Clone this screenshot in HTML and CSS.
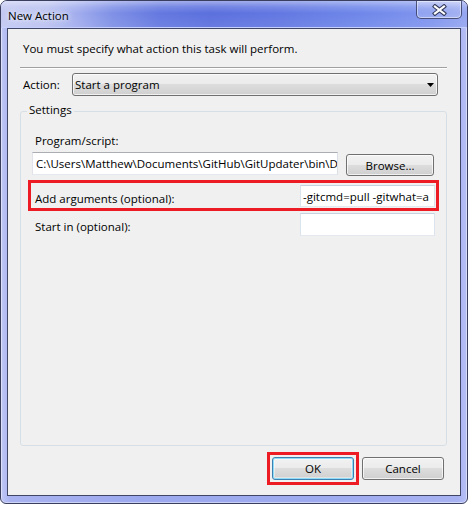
FILE: index.html
```html
<!DOCTYPE html>
<html>
<head>
<meta charset="utf-8">
<title>New Action</title>
<link rel="stylesheet" href="styles.css">
</head>
<body>
<div class="window">
  <div class="titlebar">
    <span class="title">New Action</span>
    <div class="close">
      <svg width="15" height="12" viewBox="0 0 15 12">
        <path d="M3 2.5 L12 9.5 M12 2.5 L3 9.5" stroke="#33395a" stroke-width="4.2" stroke-linecap="square" fill="none"/>
        <path d="M3 2.5 L12 9.5 M12 2.5 L3 9.5" stroke="#ffffff" stroke-width="2.2" stroke-linecap="square" fill="none"/>
      </svg>
    </div>
  </div>
  <div class="client">
    <p class="intro">You must specify what action this task will perform.</p>
    <div class="sep"></div>
    <div class="action-row">
      <span class="action-label">Action:</span>
      <div class="combo">
        <span>Start a program</span>
        <svg class="arrow" width="7" height="4" viewBox="0 0 7 4"><path d="M0 0 H7 L3.5 4 Z" fill="#000"/></svg>
      </div>
    </div>
    <fieldset class="settings">
      <legend>Settings</legend>
      <span class="prog-label">Program/script:</span>
      <div class="prog-row">
        <div class="textbox prog-input"><span>C:\Users\Matthew\Documents\GitHub\GitUpdater\bin\D</span></div>
        <div class="btn browse">Browse...</div>
      </div>
      <div class="args-box">
        <span class="field-label">Add arguments (optional):</span>
        <div class="textbox small-input args-input"><span>-gitcmd=pull -gitwhat=a</span></div>
      </div>
      <div class="start-row">
        <span class="field-label">Start in (optional):</span>
        <div class="textbox small-input start-input"></div>
      </div>
    </fieldset>
    <div class="buttons">
      <div class="ok-mark"><div class="btn dlg-btn default">OK</div></div>
      <div class="btn dlg-btn">Cancel</div>
    </div>
  </div>
</div>
</body>
</html>
```
FILE: styles.css
```css
* { box-sizing: border-box; }

body {
  margin: 0;
  background: #ffffff;
  font-family: "Open Sans", "Noto Sans", sans-serif;
  font-size: 11.5px;
  color: #000;
}

.window {
  width: 468px;
  height: 504px;
  border: 1px solid #3a3f60;
  border-radius: 7px 7px 6px 6px;
  padding: 0 6px 7px;
  display: flex;
  flex-direction: column;
  overflow: hidden;
  background: linear-gradient(to right, #c0c8f5 0, #a9b3f1 2%, #9ca9ee 30%, #9eabef 70%, #a7b2f2 98%, #b8c0f5 100%);
  box-shadow: inset 0 0 0 1px rgba(255, 255, 255, 0.45);
}

.titlebar {
  height: 27px;
  margin: 0 -6px;
  display: flex;
  align-items: flex-start;
  padding-left: 7px;
  background:
    linear-gradient(to bottom, rgba(255,255,255,0.42) 0, rgba(255,255,255,0.14) 22%, rgba(255,255,255,0) 45%, rgba(255,255,255,0.08) 100%),
    linear-gradient(to right, #c2c8f2 0, #b9c1f0 10%, #a3aeee 16%, #7f90e6 24%, #6478e0 34%, #5c70de 45%, #6378e2 60%, #7088ea 78%, #8095ee 92%, #96a6f0 100%);
  box-shadow: inset 0 -1px 0 #c7cfff;
}

.title {
  padding-top: 7px;
  line-height: 15px;
  text-shadow: 0 0 8px rgba(255, 255, 255, 0.95), 0 0 4px rgba(255, 255, 255, 0.8);
}

.close {
  margin-left: auto;
  margin-right: 5px;
  width: 46px;
  height: 18px;
  border: 1px solid rgba(40, 46, 80, 0.75);
  border-top: none;
  border-radius: 0 0 5px 5px;
  background: linear-gradient(to bottom, rgba(255,255,255,0.25), rgba(255,255,255,0.12) 50%, rgba(255,255,255,0.2));
  box-shadow: inset 0 0 0 1px rgba(255, 255, 255, 0.45);
  display: flex;
  justify-content: center;
  padding-top: 3px;
}

.client {
  flex: 1;
  border: 1px solid #3f4666;
  background: #f0f0f0;
  display: flex;
  flex-direction: column;
}

.intro {
  margin: 12px 0 0 15px;
  line-height: 15px;
}

.sep {
  margin: 11px 0 0 12px;
  width: 427px;
  height: 2px;
  border-top: 1px solid #a0a0a0;
  border-bottom: 1px solid #ffffff;
}

.action-row {
  display: flex;
  align-items: center;
  margin: 4px 0 0 15px;
  height: 23px;
}

.action-label {
  width: 49px;
  line-height: 15px;
}

.combo {
  width: 366px;
  height: 23px;
  border: 1px solid #707070;
  border-radius: 3px;
  background: linear-gradient(to bottom, #f2f2f2 0, #ebebeb 49%, #dddddd 50%, #cfcfcf 100%);
  box-shadow: inset 0 0 0 1px rgba(255, 255, 255, 0.7);
  display: flex;
  align-items: center;
  justify-content: space-between;
  padding: 0 3px 0 2px;
  line-height: 15px;
}

.combo .arrow { display: block; }

.settings {
  flex: 1;
  min-width: 0;
  width: 427px;
  margin: 6px 0 0 12px;
  padding: 0;
  border: 1px solid #d5dfe5;
  border-radius: 3px;
}

.settings legend {
  margin-left: 6px;
  padding: 0 2px 4px;
  line-height: 15px;
}

.prog-label {
  display: block;
  margin: 12px 0 0 14px;
  line-height: 15px;
}

.prog-row {
  display: flex;
  align-items: flex-start;
  margin: 4px 0 0 11px;
}

.textbox {
  background: #ffffff;
  border: 1px solid;
  border-color: #abadb3 #dbdfe6 #e3e9ef #e2e3ea;
  white-space: nowrap;
  overflow: hidden;
  line-height: 15px;
}

.prog-input {
  width: 306px;
  height: 23px;
  padding: 3px 0 0 3px;
}

.btn {
  border: 1px solid #707070;
  border-radius: 3px;
  background: linear-gradient(to bottom, #f2f2f2 0, #ebebeb 49%, #dddddd 50%, #cfcfcf 100%);
  box-shadow: inset 0 0 0 1px rgba(255, 255, 255, 0.7);
  display: flex;
  align-items: center;
  justify-content: center;
  line-height: 15px;
}

.browse {
  width: 88px;
  height: 22px;
  margin: 2px 0 0 8px;
}

.args-box {
  width: 411px;
  height: 31px;
  margin: 4px 0 0 7px;
  border: 3px solid #ed1c24;
  display: flex;
  align-items: flex-start;
  justify-content: space-between;
  padding: 2px 1px 0 4px;
}

.field-label {
  margin-top: 6px;
  line-height: 15px;
}

.small-input {
  width: 135px;
  padding: 3px 0 0 2px;
  border-color: #c5d2e0 #dbe3ec #e3e9ef #dbe3ec;
}

.args-input { height: 22px; }

.start-row {
  display: flex;
  align-items: flex-start;
  justify-content: space-between;
  margin-top: 2px;
  padding: 0 11px 0 14px;
}

.start-input { height: 23px; }

.buttons {
  display: flex;
  justify-content: flex-end;
  align-items: center;
  gap: 3px;
  margin: 6px 16px 10px 0;
}

.ok-mark {
  border: 3px solid #ed1c24;
  padding: 2px;
}

.dlg-btn {
  width: 82px;
  height: 23px;
}

.btn.default {
  border-color: #3c7fb1;
  box-shadow: inset 0 0 0 1px #8fdcf8, inset 0 0 0 2px rgba(255,255,255,0.4);
}
```
